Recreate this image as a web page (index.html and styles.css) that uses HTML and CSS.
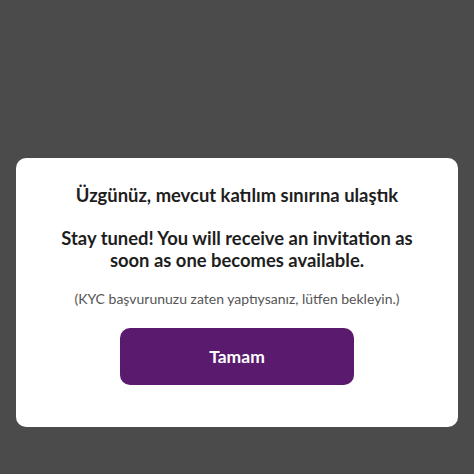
FILE: index.html
```html
<!DOCTYPE html>
<html lang="tr">
<head>
<meta charset="utf-8">
<link rel="stylesheet" href="styles.css">
</head>
<body>
<div class="screen">
  <div class="card">
    <p class="title">Üzgünüz, mevcut katılım sınırına ulaştık</p>
    <p class="message">Stay tuned! You will receive an invitation as<br>soon as one becomes available.</p>
    <p class="note">(KYC başvurunuzu zaten yaptıysanız, lütfen bekleyin.)</p>
    <button class="btn">Tamam</button>
  </div>
</div>
</body>
</html>
```
FILE: styles.css
```css
html, body {
  margin: 0;
  padding: 0;
  background: #4b4b4b;
}
.screen {
  width: 474px;
  height: 474px;
  padding-top: 158px;
  box-sizing: border-box;
  display: flex;
  flex-direction: column;
  align-items: center;
}
.card {
  width: 442px;
  height: 269px;
  box-sizing: border-box;
  background: #ffffff;
  border-radius: 10px;
  display: flex;
  flex-direction: column;
  align-items: center;
  padding-top: 26px;
  font-family: "Lato", "Noto Sans", sans-serif;
  color: #1e1e1e;
}
.title {
  margin: 0;
  font-size: 18.4px;
  font-weight: 700;
  line-height: 22px;
}
.message {
  margin: 21px 0 0;
  font-size: 18.4px;
  font-weight: 700;
  line-height: 22px;
  text-align: center;
}
.note {
  margin: 19px 0 0;
  font-size: 14px;
  line-height: 18px;
  color: #555555;
}
.btn {
  margin-top: 20px;
  width: 234px;
  height: 57px;
  border: none;
  border-radius: 10px;
  background: #5a1b6e;
  color: #ffffff;
  font-family: "Lato", "Noto Sans", sans-serif;
  font-size: 17.5px;
  font-weight: 700;
}
```
